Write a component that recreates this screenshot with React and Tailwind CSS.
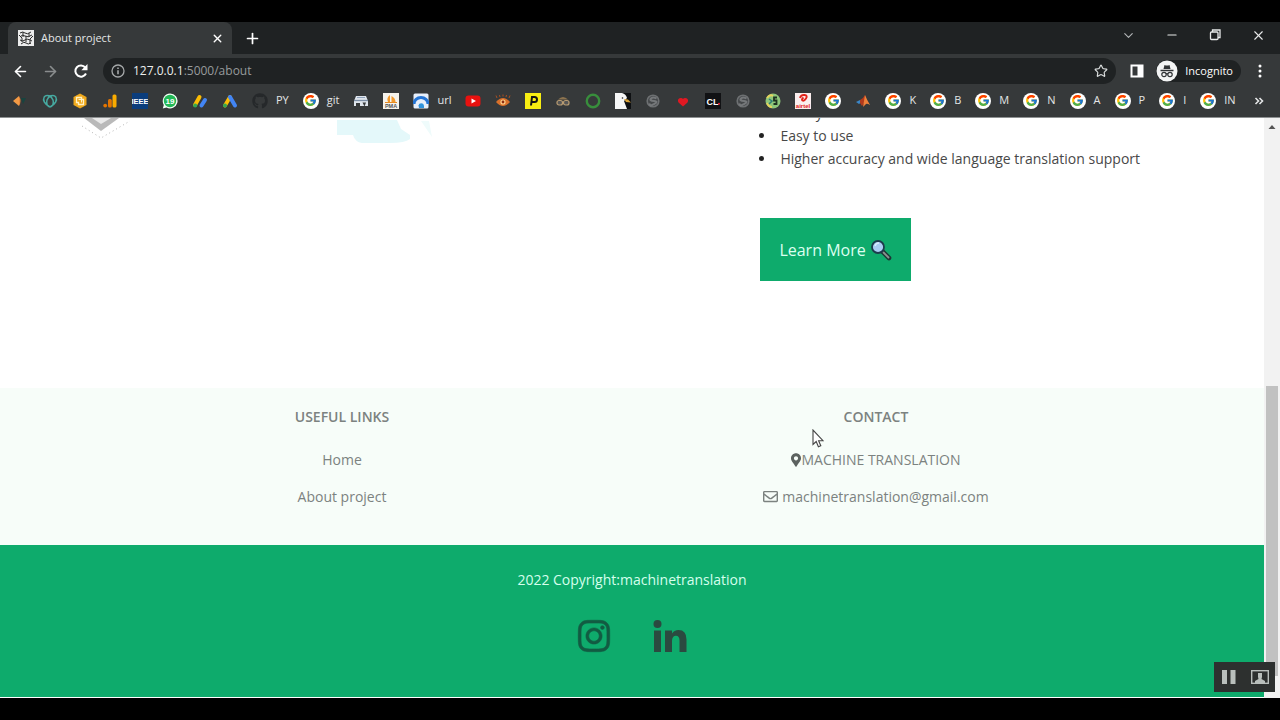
import { FcGoogle } from 'react-icons/fc';
import { FaInstagram, FaMapMarkerAlt, FaRegEnvelope, FaGithub } from 'react-icons/fa';
import { ArrowLeft, ArrowRight, ChevronDown, Minus, Plus, Star, X } from 'lucide-react';

const Glyph = ({ children }) => (
  <svg viewBox="0 0 16 16" className="w-4 h-4 shrink-0">{children}</svg>
);

const GoogleIcon = () => (
  <span className="flex items-center justify-center w-4 h-4 rounded-full bg-white shrink-0">
    <FcGoogle size={13} />
  </span>
);

const GlobeIcon = () => (
  <Glyph>
    <circle cx="8" cy="8" r="5.800" fill="#45484a" stroke="#6d7072" strokeWidth="1.600" />
    <path d="M11.500 5.500Q8 3.500 6 5.500T9 8t0 3.200-4-.7" fill="none" stroke="#75787a" strokeWidth="2" />
  </Glyph>
);

const bookmarks = [
  { name: 'Diamond', icon: <Glyph><path d="M1 8l6-5v10z" fill="#f39a45" /><path d="M7 3q3 5 0 10z" fill="#e8873b" /><path d="M9 5l5 0-3 6z" fill="#17443f" /></Glyph> },
  { name: 'GoDaddy', icon: <Glyph><path d="M8 14C2.500 11.500 .5 7 2.200 4C4.500 .8 9.500 3 11 7c1.200 3.500-.6 7-3 7zM8 14C13.500 11.500 15.500 7 13.800 4C11.500 .8 6.500 3 5 7c-1.200 3.500 .6 7 3 7z" fill="none" stroke="#46a9a0" strokeWidth="1.500" /></Glyph> },
  { name: 'Cloud', icon: <Glyph><path d="M8 .5l6.500 3.500v8L8 15.500 1.500 12V4z" fill="#f0a91c" /><path d="M4.500 4.500h5v2h2v5h-5v-2h-2z" fill="none" stroke="#fff1c4" strokeWidth="1.300" /><path d="M6.500 6.500h3v3" fill="none" stroke="#fff1c4" /></Glyph> },
  { name: 'Analytics', icon: <Glyph><rect x="10.500" y="1.500" width="4" height="13" rx="1.500" fill="#f9ab00" /><rect x="6" y="6" width="3.800" height="8.500" rx="1.500" fill="#e37400" /><circle cx="3.200" cy="12.600" r="1.900" fill="#e37400" /></Glyph> },
  { name: 'IEEE', icon: <Glyph><rect width="16" height="16" fill="#0b3d7c" /><text x="8" y="11" textAnchor="middle" fontSize="7.500" fontWeight="700" fontFamily="Liberation Sans, sans-serif" fill="#fff">IEEE</text></Glyph> },
  { name: 'WhatsApp', icon: <Glyph><path d="M8 .5a7.500 7.500 0 1 1-3.500 14.100L.8 15.500l1-3.600A7.500 7.500 0 0 1 8 .5z" fill="#f2fff5" /><circle cx="8" cy="8" r="6.200" fill="#22b856" /><text x="8" y="10.800" textAnchor="middle" fontSize="8" fontWeight="700" fontFamily="Liberation Sans, sans-serif" fill="#fff">19</text></Glyph> },
  { name: 'AdSense', icon: <Glyph><path d="M3 12L7.500 4" stroke="#fbbc04" strokeWidth="4" strokeLinecap="round" /><path d="M9.500 12.500L13 7" stroke="#4285f4" strokeWidth="4" strokeLinecap="round" /><circle cx="3.200" cy="12.500" r="2" fill="#34a853" /></Glyph> },
  { name: 'Ads', icon: <Glyph><path d="M3 12.500L8 4" stroke="#fbbc04" strokeWidth="3.800" strokeLinecap="round" /><path d="M8 4l5 8.500" stroke="#4285f4" strokeWidth="4" strokeLinecap="round" /><circle cx="3" cy="12.500" r="2" fill="#34a853" /></Glyph> },
  { name: 'PY', label: 'PY', icon: <FaGithub className="w-4 h-4 shrink-0 text-[#25282a]" /> },
  { name: 'git', label: 'git', icon: <GoogleIcon /> },
  { name: 'Store', icon: <Glyph><path d="M3 3h10l2 5v5H1V8z" fill="#dfe5ec" /><path d="M1 7.500h14" stroke="#7d8fa6" strokeWidth="1.300" /><path d="M3 10h4v3H3zM9.500 9.500h3.500l-1.500 4z" fill="#36393a" /><path d="M4 4.500h8" stroke="#8fa2ba" /></Glyph> },
  { name: 'phpMyAdmin', icon: <Glyph><rect width="16" height="16" fill="#f6f3ec" /><path d="M5 9q-2-4 2-7v7zM8.500 9V3q4 2 4 6z" fill="#f29a2e" /><path d="M2 9.500h12" stroke="#e38b25" /><text x="8" y="15" textAnchor="middle" fontSize="5.500" fontWeight="700" fontFamily="Liberation Sans, sans-serif" fill="#555">PMA</text></Glyph> },
  { name: 'url', label: 'url', icon: <Glyph><rect x=".5" y=".5" width="15" height="15" rx="1.500" fill="#e7effb" /><path d="M1 11a7 6.500 0 0 1 14 0" fill="none" stroke="#2474d4" strokeWidth="3" /><path d="M5.500 12.500a2.800 2.800 0 0 1 5.500 0v2.500H6z" fill="#2f93dd" /></Glyph> },
  { name: 'YouTube', icon: <Glyph><rect x=".5" y="2.500" width="15" height="11" rx="3" fill="#e8110f" /><path d="M6.500 5.500v5L11 8z" fill="#fff" /></Glyph> },
  { name: 'Eye', icon: <Glyph><path d="M1 9q7-8 14 0-7 8-14 0z" fill="#d9702a" /><circle cx="8" cy="9" r="2.600" fill="#ffd08a" /><circle cx="8" cy="9" r="1.400" fill="#8b2c12" /><path d="M2 5L1 2.500M5 4L4.500 2M8 3.500V1.500M11 4l.5-2M14 5l1-2.500" stroke="#a94f20" /></Glyph> },
  { name: 'P', icon: <Glyph><rect width="16" height="16" fill="#f8ee12" /><path d="M6 12.500L7 4h2.500a2.400 2.400 0 0 1 0 5H6.500" fill="none" stroke="#151515" strokeWidth="2" /></Glyph> },
  { name: 'Glasses', icon: <Glyph><path d="M3 6.500q5-5 10 0z" fill="#8d744f" /><rect x="2" y="7.500" width="5.500" height="4.500" rx="2" fill="#555" stroke="#b89c72" strokeWidth="1.200" /><rect x="8.500" y="7.500" width="5.500" height="4.500" rx="2" fill="#555" stroke="#b89c72" strokeWidth="1.200" /></Glyph> },
  { name: 'Ring', icon: <Glyph><circle cx="8" cy="8" r="6.200" fill="none" stroke="#388e3c" strokeWidth="2.400" /></Glyph> },
  { name: 'Eagle', icon: <Glyph><rect width="16" height="16" fill="#0e1012" /><path d="M0 0h7q4 1 5 5l-3 3 3 8H0z" fill="#f6f7f7" /><path d="M9 6l4 .5 3 3-5-.5z" fill="#d9a33a" /><circle cx="7.500" cy="5" r=".8" fill="#222" /></Glyph> },
  { name: 'Site one', icon: <GlobeIcon /> },
  { name: 'Heart', icon: <Glyph><path d="M8 13.500L3.500 9.500Q2 6.500 4.500 5.200 7 4.500 8 6q1-1.500 3.500-.8Q14 6.500 12.500 9.500z" fill="#e01822" /></Glyph> },
  { name: 'CL', icon: <Glyph><rect width="16" height="16" fill="#111214" /><text x="7.500" y="11.500" textAnchor="middle" fontSize="9" fontWeight="700" fontFamily="Liberation Sans, sans-serif" fill="#fff">CL</text><circle cx="14" cy="10.800" r="1" fill="#e0203a" /></Glyph> },
  { name: 'Site two', icon: <GlobeIcon /> },
  { name: 'Badge', icon: <Glyph><circle cx="8" cy="8" r="7.500" fill="#8dc67a" /><path d="M2 5q3-4 6-2M2 10q2 4 5 4" stroke="#e6d25b" strokeWidth="2" fill="none" /><path d="M12 4.500H9v3h2.500v3.500H8.500" stroke="#1e3320" strokeWidth="1.800" fill="none" /><path d="M4 6l3 2-3 3" stroke="#2f7b74" strokeWidth="1.500" fill="none" /></Glyph> },
  { name: 'airtel', icon: <Glyph><rect width="16" height="16" fill="#fbeeee" /><path d="M5 5q1-3.500 4.500-3T11 5.500 7.500 7.500Q6 6.500 8.500 4.500" fill="none" stroke="#e2231a" strokeWidth="1.900" /><text x="8" y="14.500" textAnchor="middle" fontSize="6" fontWeight="700" fontFamily="Liberation Sans, sans-serif" fill="#e2231a">airtel</text></Glyph> },
  { name: 'Google', icon: <GoogleIcon /> },
  { name: 'MATLAB', icon: <Glyph><path d="M1 9l4-2 2 2-3 2z" fill="#3b87c8" /><path d="M5 7q3-1 5-5l1 6-4 5-2-3z" fill="#b23a1c" /><path d="M10 2q2 5 5 10-3-2-4-1l-3 3z" fill="#f0813a" /></Glyph> },
  { name: 'K', label: 'K', icon: <GoogleIcon /> },
  { name: 'B', label: 'B', icon: <GoogleIcon /> },
  { name: 'M', label: 'M', icon: <GoogleIcon /> },
  { name: 'N', label: 'N', icon: <GoogleIcon /> },
  { name: 'A', label: 'A', icon: <GoogleIcon /> },
  { name: 'P search', label: 'P', icon: <GoogleIcon /> },
  { name: 'I', label: 'I', icon: <GoogleIcon /> },
  { name: 'IN', label: 'IN', icon: <GoogleIcon /> },
];

const TabStrip = () => (
  <div className="flex h-8 pl-2 bg-[#1f2223]">
    <div className="flex items-center w-56 pl-2.5 pr-2 rounded-t-lg bg-[#36393a]">
      <svg viewBox="0 0 16 16" className="w-4 h-4 mr-[7px]">
        <rect width="16" height="16" fill="#ececec" />
        <path d="M2 3q3-2 5 0t6-1M2 7q2-3 5-1t7-1M2 10q3 2 5 0t7 1M3 14q3-3 5-1t5 0M5 2v5M11 3v4M8 6v6M4 8v4M12 9v5M1 5l3 3M15 6l-3 3" fill="none" stroke="#2b2b2b" strokeWidth="1" />
      </svg>
      <span className="flex-1 text-[11px] text-[#e4e6e7]">About project</span>
      <button aria-label="Close tab" className="text-white"><X size={13} strokeWidth={2.6} /></button>
    </div>
    <button aria-label="New tab" className="ml-3 text-white"><Plus size={17} strokeWidth={2.4} /></button>
    <div className="flex items-center gap-[29px] ml-auto pr-3.5 -mt-1.5 text-[#e8eaea]">
      <button aria-label="Search tabs" className="text-[#b4b7b8]"><ChevronDown size={15} strokeWidth={1.8} /></button>
      <button aria-label="Minimize"><Minus size={14} /></button>
      <button aria-label="Restore">
        <svg viewBox="0 0 14 14" className="w-3.5 h-3.5" fill="none" stroke="currentColor" strokeWidth="1.3">
          <rect x="2.500" y="4" width="7.500" height="7.500" rx="1" />
          <path d="M4.500 4V2H12v7.500h-2" />
        </svg>
      </button>
      <button aria-label="Close"><X size={15} strokeWidth={1.8} /></button>
    </div>
  </div>
);

const Toolbar = () => (
  <div className="flex items-center h-[34px] pl-3 pr-[13px] bg-[#36393a] text-white">
    <button aria-label="Back"><ArrowLeft size={17} strokeWidth={2.3} /></button>
    <button aria-label="Forward" className="ml-[13px] text-[#8a8d8e]"><ArrowRight size={17} strokeWidth={2.3} /></button>
    <button aria-label="Reload" className="ml-3.5">
      <svg viewBox="0 0 16 16" className="w-4 h-4" fill="none" stroke="currentColor" strokeWidth="2">
        <path d="M13 10.500A5.600 5.600 0 1 1 12.300 4.500" />
        <path d="M14.500 1v6.200H8.300z" fill="currentColor" stroke="none" />
      </svg>
    </button>
    <div className="flex flex-1 items-center h-[26px] ml-3.5 pl-2 pr-2 rounded-full bg-[#1f2223]">
      <svg viewBox="0 0 14 14" className="w-3.5 h-3.5 mr-2 text-[#a5a8a9]" fill="none" stroke="currentColor" strokeWidth="1.300">
        <circle cx="7" cy="7" r="6" />
        <path d="M7 6.200v4M7 3.500v1.400" strokeWidth="1.600" />
      </svg>
      <a href="#about" className="flex-1 text-xs text-[#979b9c]"><span className="text-[#eceeee]">127.0.0.1</span>:5000/about</a>
      <button aria-label="Bookmark this page" className="text-[#d9dcdc]"><Star size={14} /></button>
    </div>
    <button aria-label="Side panel" className="ml-3.5">
      <svg viewBox="0 0 14 14" className="w-3.5 h-3.5">
        <path d="M.5.5h13v13H.5zM2.500 2.500v9h5v-9z" fill="#fff" fillRule="evenodd" />
      </svg>
    </button>
    <button className="flex items-center h-[22px] ml-3 pr-2 rounded-full bg-[#1f2223] text-[11px]">
      <svg viewBox="0 0 22 22" className="w-[22px] h-[22px] mr-[7px]">
        <circle cx="11" cy="11" r="10.500" fill="#f3f4f4" />
        <path d="M7.500 9l1-4q2.500 1 5 0l1 4z" fill="#303335" />
        <path d="M4.500 10.500h13" stroke="#303335" strokeWidth="1.500" />
        <g fill="none" stroke="#303335" strokeWidth="1.200">
          <circle cx="8" cy="14.500" r="2.200" />
          <circle cx="14" cy="14.500" r="2.200" />
          <path d="M10 14q1-.6 2 0" />
        </g>
      </svg>
      Incognito
    </button>
    <button aria-label="Menu" className="ml-3">
      <svg viewBox="0 0 14 14" className="w-3.5 h-3.5" fill="currentColor">
        <circle cx="7" cy="2" r="1.500" /><circle cx="7" cy="7" r="1.500" /><circle cx="7" cy="12" r="1.500" />
      </svg>
    </button>
  </div>
);

const BookmarksBar = () => (
  <nav className="flex items-center gap-3.5 h-[30px] pl-3 pr-4 pb-1 border-b border-[#8e9192] bg-[#36393a] text-[11px] text-[#e4e6e7]">
    {bookmarks.map((item) => (
      <a key={item.name} href="#bookmark" aria-label={item.name} className="flex items-center gap-2">
        {item.icon}
        {item.label && <span>{item.label}</span>}
      </a>
    ))}
    <button aria-label="More bookmarks" className="ml-auto">
      <svg viewBox="0 0 10 10" className="w-2.5 h-2.5" fill="none" stroke="currentColor" strokeWidth="1.600">
        <path d="M1.500 2l3 3-3 3M5.500 2l3 3-3 3" />
      </svg>
    </button>
  </nav>
);

const Hero = () => (
  <section className="flex">
    <div className="w-3/5 pl-20">
      <svg viewBox="0 0 360 60" className="w-[360px] h-[60px]">
        <path d="M4 1L21 14 39 1z" fill="#b9b9b9" />
        <path d="M12 1L21 7 31 1z" fill="#e9e9e9" />
        <path d="M2 9L21 21 50 4" fill="none" stroke="#b5b5b5" strokeDasharray="1 3" />
        <path d="M257 3h60l4 9 9 6v4q-5 4-20 4h-28q-7-1-9-8h-16z" fill="#e4f8fa" />
        <path d="M341 4h8l3 16z" fill="#effbfb" />
      </svg>
    </div>
    <div className="w-2/5 pl-0.5 pb-[107px]">
      <ul className="-mt-4 pl-4 list-disc text-sm leading-[23px] text-[#484848] marker:text-[#222]">
        <li className="pl-1">Handy</li>
        <li className="pl-1">Easy to use</li>
        <li className="pl-1">Higher accuracy and wide language translation support</li>
      </ul>
      <button className="flex items-center gap-1 h-[63px] mt-12 px-[19px] bg-[#0eab6c] text-base text-[#dcfff0]">
        Learn More
        <svg viewBox="0 0 22 22" className="w-[22px] h-[22px]">
          <path d="M12 12l7 7" stroke="#1d3535" strokeWidth="4.600" strokeLinecap="round" />
          <path d="M13.500 13.500l5 5" stroke="#8a9390" strokeWidth="1.800" strokeLinecap="round" />
          <circle cx="8" cy="8" r="6" fill="#a9cdf3" stroke="#1d3b4d" strokeWidth="1.800" />
          <path d="M5 7q1-3 4-3" stroke="#d9ecff" strokeWidth="1.500" fill="none" />
        </svg>
      </button>
    </div>
  </section>
);

const Footer = () => (
  <footer className="text-sm leading-[23px]">
    <div className="grid grid-cols-2 pl-[75px] pr-[121px] pt-[17px] pb-[37px] bg-[#f7fdf9] text-center text-[#7c8280]">
      <div>
        <h6 className="mb-5 font-semibold">USEFUL LINKS</h6>
        <p className="mb-3.5"><a href="#home">Home</a></p>
        <p><a href="#about">About project</a></p>
      </div>
      <div>
        <h6 className="mb-5 font-semibold">CONTACT</h6>
        <p className="flex items-center justify-center mb-3.5">
          <FaMapMarkerAlt className="w-2.5 h-3.5 text-[#5c6260]" />
          MACHINE TRANSLATION
        </p>
        <p className="flex items-center justify-center gap-1">
          <FaRegEnvelope size={15} />
          <a href="mailto:machinetranslation@gmail.com">machinetranslation@gmail.com</a>
        </p>
      </div>
    </div>
    <div className="pt-[23px] pb-[43px] border-b border-white bg-[#0eab6c] text-center text-[#d5ffec]">
      <p>2022 Copyright:machinetranslation</p>
      <div className="flex justify-center gap-10 mt-[27px]">
        <a href="#instagram" aria-label="Instagram" className="text-[#125b42]">
          <FaInstagram size={36} stroke="currentColor" strokeWidth={8} />
        </a>
        <a href="#linkedin" aria-label="LinkedIn" className="text-[#2b4a40]">
          <svg viewBox="0 0 36 36" className="w-9 h-9" fill="currentColor">
            <circle cx="5.500" cy="6" r="4" />
            <path d="M2 12.500h7V34H2z" />
            <path d="M13 12.500h7v3q2.200-3.500 6.500-3.500 8 0 8 9.500V34h-7V22.500q0-4.700-3.600-4.700T20 22.500V34h-7z" />
          </svg>
        </a>
      </div>
    </div>
  </footer>
);

const App = () => (
  <div className="flex flex-col h-screen py-[22px] overflow-hidden bg-black font-['Open_Sans',sans-serif]">
    <header>
      <TabStrip />
      <Toolbar />
      <BookmarksBar />
    </header>
    <div className="relative flex flex-1 min-h-0">
      <main className="flex flex-col flex-1 justify-end min-h-0 overflow-hidden bg-white">
        <Hero />
        <Footer />
      </main>
      <div className="flex flex-col items-center w-4 bg-[#f2f2f2]">
        <svg viewBox="0 0 16 18" className="w-4 h-[18px]"><path d="M4.500 11h7L8 7z" fill="#555" /></svg>
        <div className="flex-1" />
        <div className="w-3 h-1/2 mb-[22px] bg-[#c1c1c1]" />
      </div>

      {/* mouse pointer */}
      <svg viewBox="0 0 12 19" className="absolute left-[812px] top-[311px] w-3 h-[19px]">
        <path d="M1 1v14.500l3.200-3 2.200 5.200 2.400-1-2.200-5H11z" fill="#fff" stroke="#444" strokeWidth="1.100" />
      </svg>

      {/* recorder controls */}
      <div className="absolute right-[5px] bottom-1.5 flex items-center h-[30px] w-[61px] bg-[#2d302f] text-[#b9bfbc]">
        <button aria-label="Pause" className="flex flex-1 justify-center">
          <svg viewBox="0 0 14 14" className="w-3.5 h-3.5" fill="currentColor"><path d="M0 0h5v14H0zM8.500 0h5v14h-5z" /></svg>
        </button>
        <button aria-label="Webcam" className="flex flex-1 justify-center">
          <svg viewBox="0 0 18 14" className="w-[18px] h-3.5">
            <rect x=".7" y=".7" width="16.600" height="12.600" fill="none" stroke="currentColor" strokeWidth="1.400" />
            <path d="M7 3h4v4l-.5 2L14 11v2H4v-2l3.500-2L7 7z" fill="currentColor" />
          </svg>
        </button>
      </div>
    </div>
  </div>
);

export default App;
